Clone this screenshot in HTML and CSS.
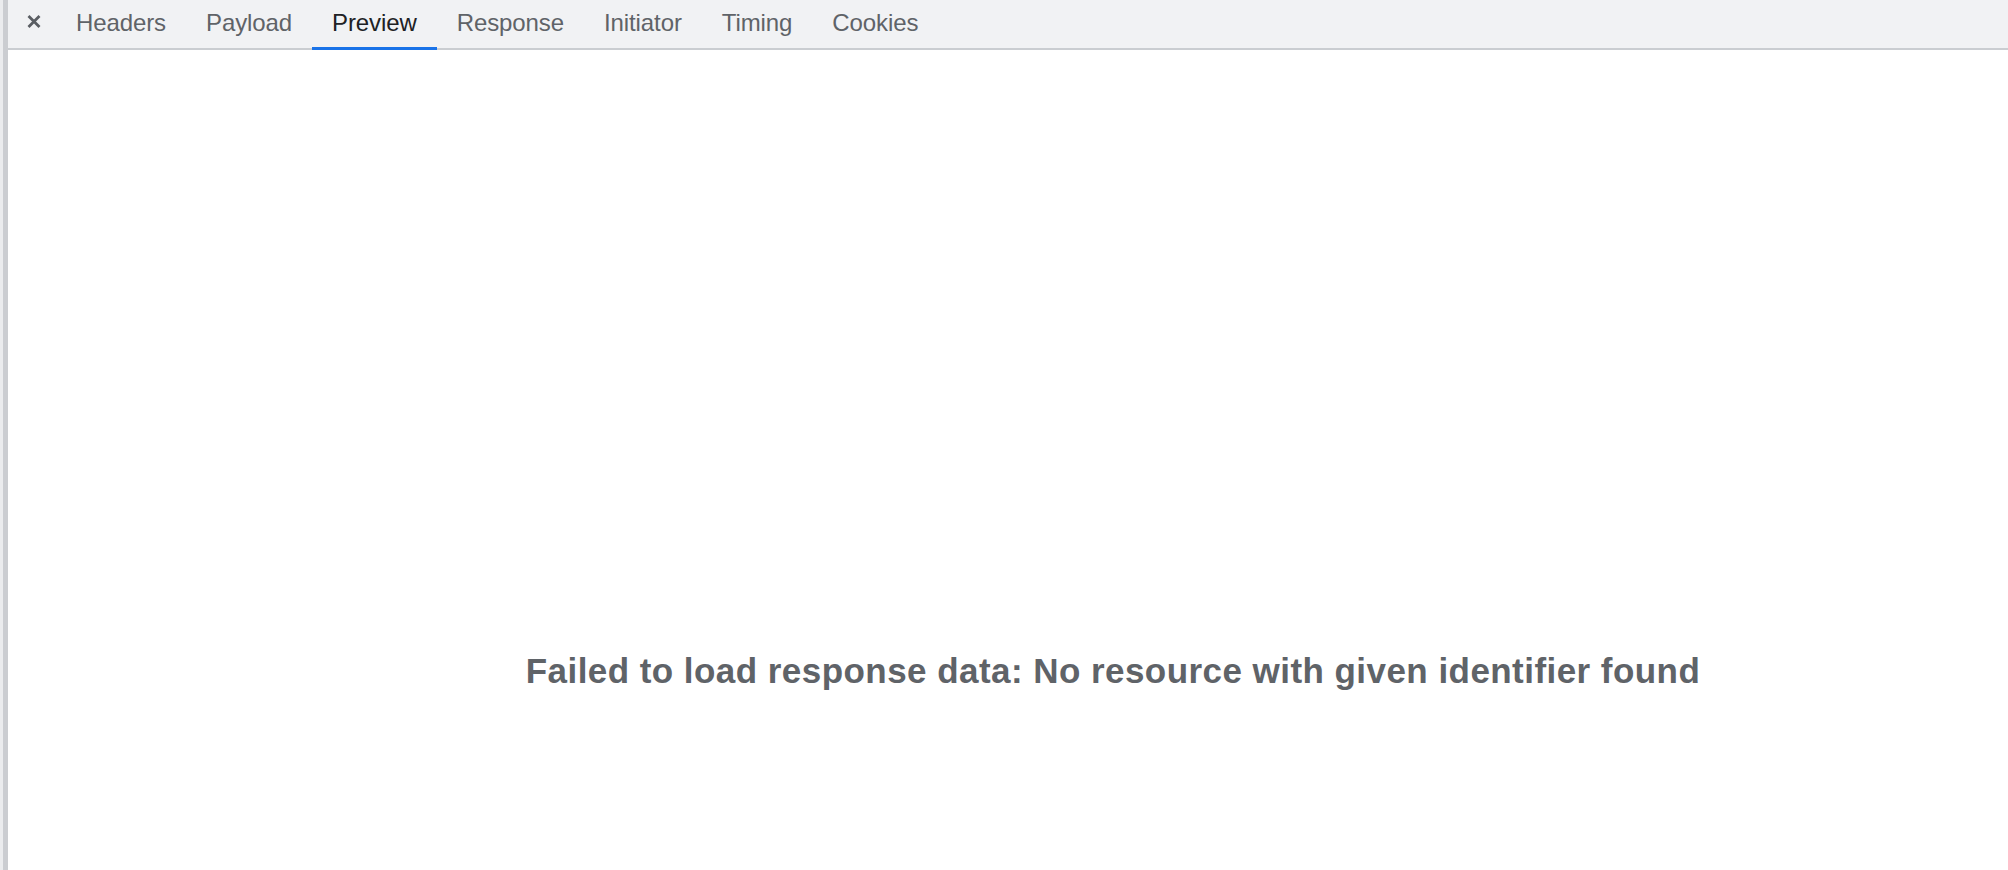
FILE: index.html
```html
<!DOCTYPE html>
<html lang="en">
<head>
<meta charset="utf-8">
<title>Network - Preview</title>
<link rel="stylesheet" href="styles.css">
</head>
<body>
<div class="panel">
  <div class="tabbar">
    <div class="close" aria-label="Close">
      <svg width="14" height="13" viewBox="0 0 14 13" aria-hidden="true">
        <path d="M1.5 1 L12.5 12 M12.5 1 L1.5 12" stroke="#5a5e63" stroke-width="2.8" stroke-linecap="butt" fill="none"/>
      </svg>
    </div>
    <div class="tab">Headers</div>
    <div class="tab">Payload</div>
    <div class="tab active">Preview</div>
    <div class="tab">Response</div>
    <div class="tab">Initiator</div>
    <div class="tab">Timing</div>
    <div class="tab">Cookies</div>
  </div>
  <div class="content">
    <div class="empty-view">Failed to load response data: No resource with given identifier found</div>
  </div>
</div>
</body>
</html>
```

FILE: styles.css
```css
html, body {
  margin: 0;
  padding: 0;
  height: 100%;
  background: #ffffff;
}

body {
  font-family: "Liberation Sans", Arial, sans-serif;
  overflow: hidden;
}

.panel {
  height: 100%;
  border-left: 3px solid #ebecee;
  position: relative;
  display: flex;
  flex-direction: column;
}

.panel::before {
  content: "";
  position: absolute;
  left: 0;
  top: 0;
  bottom: 0;
  width: 5px;
  background: #cbcdd1;
}

.tabbar {
  margin-left: 5px;
  height: 48px;
  background: #f1f2f4;
  border-bottom: 2px solid #cacdd1;
  display: flex;
  align-items: stretch;
  flex: 0 0 auto;
}

.close {
  width: 48px;
  display: flex;
  align-items: flex-start;
  padding-left: 19px;
  padding-top: 15px;
  box-sizing: border-box;
}

.close svg {
  display: block;
}

.tab {
  position: relative;
  padding: 0 20px;
  font-size: 24px;
  line-height: 46px;
  letter-spacing: -0.1px;
  color: #5f6368;
  white-space: nowrap;
}

.tab.active {
  color: #202124;
}

.tab.active::after {
  content: "";
  position: absolute;
  left: 0;
  right: 0;
  bottom: -2px;
  height: 3px;
  background: #1a73e8;
}

.content {
  margin-left: 5px;
  flex: 1 1 auto;
  padding-top: 601px;
  padding-left: 210px;
}

.empty-view {
  text-align: center;
  font-weight: bold;
  font-size: 35px;
  line-height: 40px;
  letter-spacing: 0.45px;
  color: #5f6368;
  white-space: nowrap;
}
```
